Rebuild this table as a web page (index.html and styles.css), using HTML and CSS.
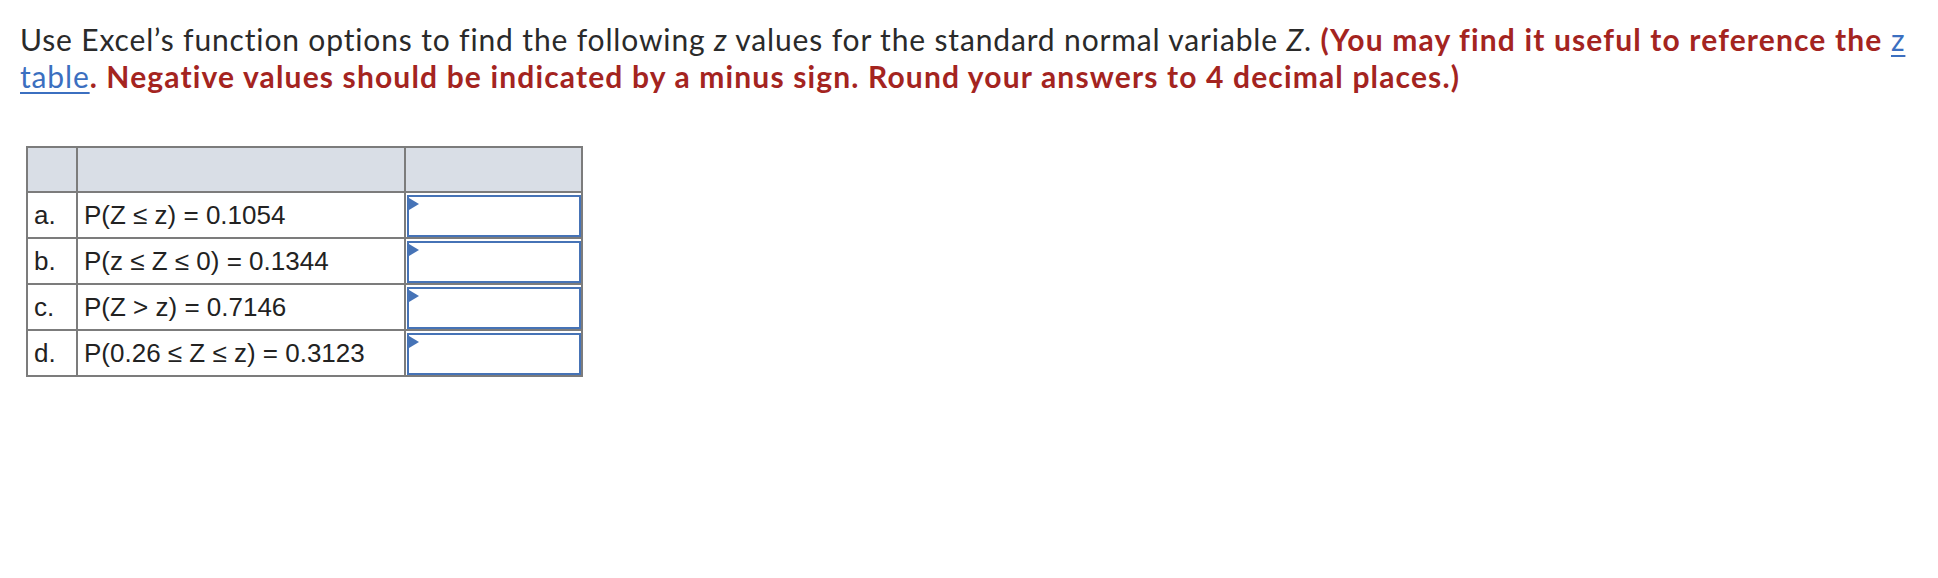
FILE: index.html
```html
<!DOCTYPE html>
<html lang="en">
<head>
<meta charset="utf-8">
<title>Standard normal z values</title>
<link rel="stylesheet" href="styles.css">
</head>
<body>
<div class="page">
  <p class="prompt">Use Excel’s function options to find the following <i>z</i> values for the standard normal variable <i>Z</i>. <strong class="note">(You may find it useful to reference the <a class="link link-strong" href="#">z</a> <a class="link" href="#">table</a>. Negative values should be indicated by a minus sign. Round your answers to 4 decimal places.)</strong></p>

  <table class="grid">
    <colgroup>
      <col class="w-label">
      <col class="w-expr">
      <col class="w-ans">
    </colgroup>
    <tr class="head">
      <td></td>
      <td></td>
      <td></td>
    </tr>
    <tr>
      <td class="c-label">a.</td>
      <td class="c-expr">P(Z ≤ z) = 0.1054</td>
      <td class="c-ans"><div class="answer"></div></td>
    </tr>
    <tr>
      <td class="c-label">b.</td>
      <td class="c-expr">P(z ≤ Z ≤ 0) = 0.1344</td>
      <td class="c-ans"><div class="answer"></div></td>
    </tr>
    <tr>
      <td class="c-label">c.</td>
      <td class="c-expr">P(Z &gt; z) = 0.7146</td>
      <td class="c-ans"><div class="answer"></div></td>
    </tr>
    <tr>
      <td class="c-label">d.</td>
      <td class="c-expr">P(0.26 ≤ Z ≤ z) = 0.3123</td>
      <td class="c-ans"><div class="answer"></div></td>
    </tr>
  </table>
</div>
</body>
</html>
```

FILE: styles.css
```css
html, body {
  margin: 0;
  padding: 0;
  background: #ffffff;
}

.page {
  padding: 21px 20px 0 20px;
}

.prompt {
  margin: 0;
  font-family: Lato, "Open Sans", sans-serif;
  font-size: 30px;
  line-height: 37px;
  letter-spacing: 0.85px;
  color: #2a2a2a;
}

.prompt i {
  font-style: italic;
}

.note {
  color: #a4241f;
  font-weight: 700;
  letter-spacing: 1.15px;
}

.link {
  color: #3b6fc0;
  font-weight: 400;
  letter-spacing: 0.85px;
  text-decoration: underline;
  text-decoration-thickness: 2px;
  text-underline-offset: 4px;
}

.grid {
  margin: 51px 0 0 6px;
  width: 555px;
  table-layout: fixed;
  border-collapse: collapse;
  font-family: "Liberation Sans", Arial, sans-serif;
  font-size: 26px;
  color: #222222;
}

.w-label { width: 50px; }
.w-expr { width: 328px; }
.w-ans { width: 177px; }

.grid td {
  border: 2px solid #7c7c7c;
  height: 43px;
  padding: 0;
  vertical-align: middle;
  white-space: nowrap;
  line-height: 30px;
}

.head td {
  background: #d9dee6;
}

.grid td.c-label {
  padding-left: 6px;
}

.grid td.c-expr {
  padding-left: 6px;
}

.grid td.c-ans {
  padding: 1px 0 0 1px;
}

.answer {
  position: relative;
  box-sizing: border-box;
  height: 42px;
  border: 2px solid #4673b6;
}

.answer::before {
  content: "";
  position: absolute;
  left: 0;
  top: 1px;
  width: 0;
  height: 0;
  border-top: 6px solid transparent;
  border-bottom: 6px solid transparent;
  border-left: 10px solid #4673b6;
}
```
